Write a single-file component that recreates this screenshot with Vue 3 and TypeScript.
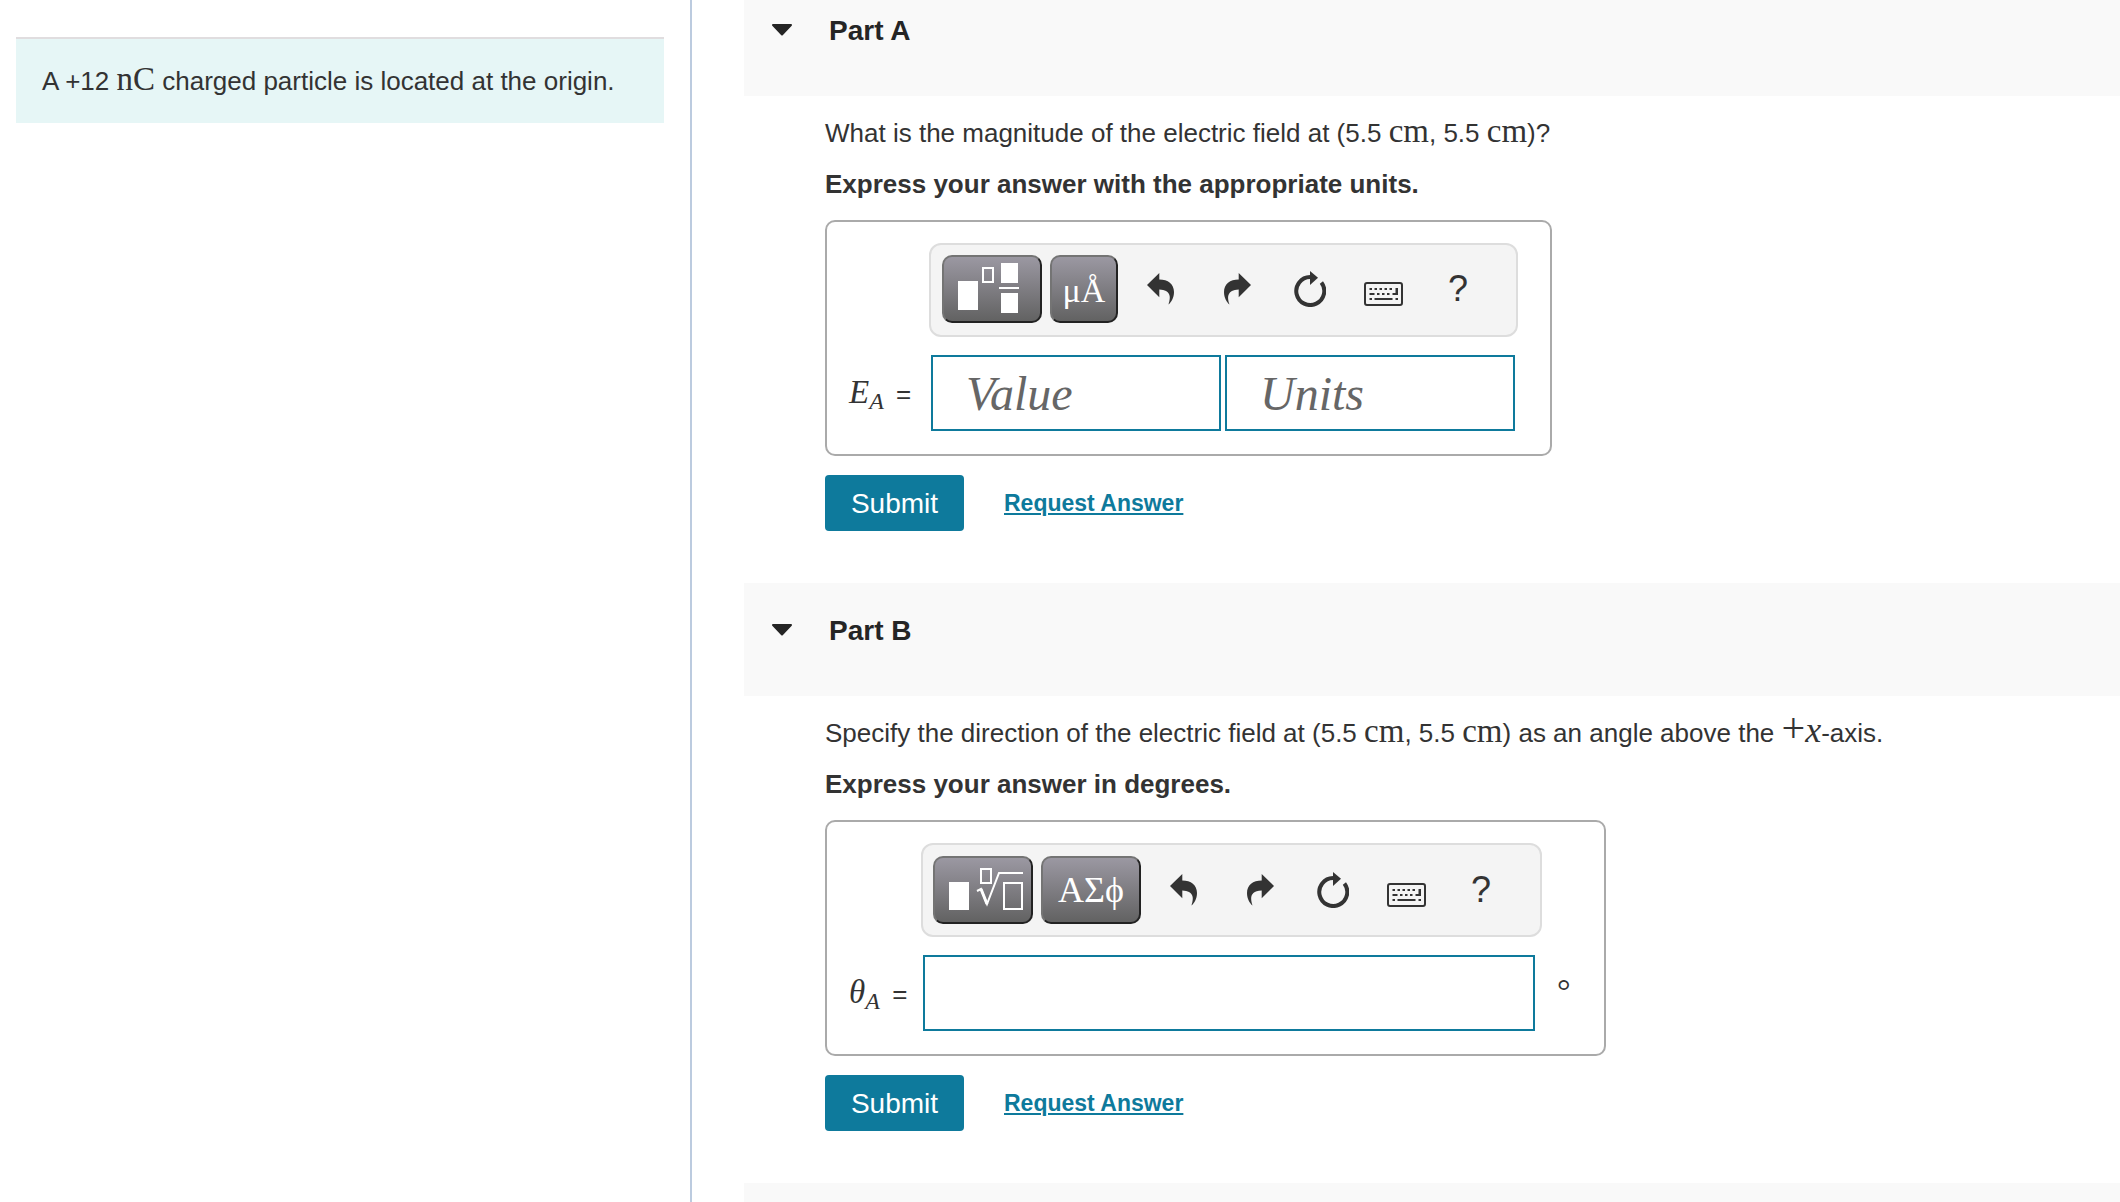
<script setup lang="ts">
import { ref } from 'vue'

const value = ref('')
const units = ref('')
const angle = ref('')

const shapes = {
  undo: 'M0 12 12.3 0V6.5C21 6.5 27 11 27 19c0 6-3 10.500-5.500 12.500C24 24 24 17 12.300 16.500V24.300Z',
  redo: 'M27 12 14.700 0V6.500C6 6.500 0 11 0 19c0 6 3 10.500 5.500 12.500C3 24 3 17 14.700 16.500V24.300Z',
}
</script>

<template>
  <div class="page">
    <aside class="intro">
      <p class="intro__card">A +12 <span class="math">nC</span> charged particle is located at the origin.</p>
    </aside>

    <main class="parts">
      <section class="part">
        <header class="part__header">
          <button class="toggle" type="button" aria-label="Collapse Part A">
            <svg width="22" height="12" viewBox="0 0 22 12"><path d="M2 1H20L11 10.500Z" stroke-width="2" stroke-linejoin="round" /></svg>
          </button>
          <h2 class="part__title">Part A</h2>
        </header>
        <form class="part__body" @submit.prevent>
          <p class="text">What is the magnitude of the electric field at (5.5 <span class="math">cm</span>, 5.5 <span class="math">cm</span>)?</p>
          <p class="text text--strong">Express your answer with the appropriate units.</p>
          <div class="answer answer--pair">
            <div class="toolbar">
              <button class="palette" type="button" aria-label="Templates">
                <svg width="96" height="64" viewBox="0 0 96 64" fill="#fff">
                  <path d="M14 24h20v29H14zM57 6h17v20H57zM55 30h20v2H55zM57 36h17v20H57z" />
                  <path d="M39 11h10v14H39z" fill="none" stroke="#fff" stroke-width="2" />
                </svg>
              </button>
              <button class="palette palette--units" type="button">μÅ</button>
              <button class="tool tool--undo" type="button" aria-label="Undo">
                <svg width="27" height="32" viewBox="0 0 27 32"><path :d="shapes.undo" /></svg>
              </button>
              <button class="tool tool--redo" type="button" aria-label="Redo">
                <svg width="27" height="32" viewBox="0 0 27 32"><path :d="shapes.redo" /></svg>
              </button>
              <button class="tool tool--reset" type="button" aria-label="Reset">
                <svg width="32" height="36" viewBox="0 0 32 36">
                  <path d="M27.400 11.500A14 14 0 1 1 16 6" fill="none" stroke="#333" stroke-width="4" />
                  <path d="M16 0 24 6.800 16 14Z" />
                </svg>
              </button>
              <button class="tool tool--keys" type="button" aria-label="Keyboard shortcuts">
                <svg width="39" height="24" viewBox="0 0 39 24">
                  <rect x="1" y="1" width="37" height="22" rx="2" fill="none" stroke="#333" stroke-width="2" />
                  <path d="M5.500 6h2.500v2H5.500zM10.500 6H13v2h-2.500zM15.500 6H18v2h-2.500zM20.500 6H23v2h-2.500zM25.500 6H28v2h-2.500zM31.500 6H34v7h-5.500v-2h3zM5.500 11h5v2h-5zM13 11h2.500v2H13zM18 11h2.500v2H18zM23 11h2.500v2H23zM5.500 16H8v2H5.500zM10.500 16h18v2h-18zM31.500 16H34v2h-2.500z" />
                </svg>
              </button>
              <button class="tool tool--help" type="button" aria-label="Help">?</button>
            </div>
            <label class="symbol" for="value-a"><i>E</i><sub>A</sub> <span class="equals">=</span></label>
            <div class="fields">
              <input id="value-a" v-model="value" class="field" type="text" placeholder="Value" />
              <input v-model="units" class="field" type="text" placeholder="Units" aria-label="Units" />
            </div>
          </div>
          <div class="actions">
            <button class="submit" type="submit">Submit</button>
            <a class="request" href="#">Request Answer</a>
          </div>
        </form>
      </section>

      <section class="part">
        <header class="part__header">
          <button class="toggle" type="button" aria-label="Collapse Part B">
            <svg width="22" height="12" viewBox="0 0 22 12"><path d="M2 1H20L11 10.500Z" stroke-width="2" stroke-linejoin="round" /></svg>
          </button>
          <h2 class="part__title">Part B</h2>
        </header>
        <form class="part__body" @submit.prevent>
          <p class="text">Specify the direction of the electric field at (5.5 <span class="math">cm</span>, 5.5 <span class="math">cm</span>) as an angle above the <span class="math math--axis">+<i>x</i></span>-axis.</p>
          <p class="text text--strong">Express your answer in degrees.</p>
          <div class="answer answer--single">
            <div class="toolbar">
              <button class="palette" type="button" aria-label="Templates">
                <svg width="96" height="64" viewBox="0 0 96 64" fill="none" stroke="#fff" stroke-width="2">
                  <path d="M14 24h20v28H14z" fill="#fff" stroke="none" />
                  <path d="M46 11h10v14H46zM69 25h18v26H69zM42 33 46 31 52 46 64 15H88" />
                  <path d="M46 31 52 46" stroke-width="3" />
                </svg>
              </button>
              <button class="palette" type="button">ΑΣϕ</button>
              <button class="tool tool--undo" type="button" aria-label="Undo">
                <svg width="27" height="32" viewBox="0 0 27 32"><path :d="shapes.undo" /></svg>
              </button>
              <button class="tool tool--redo" type="button" aria-label="Redo">
                <svg width="27" height="32" viewBox="0 0 27 32"><path :d="shapes.redo" /></svg>
              </button>
              <button class="tool tool--reset" type="button" aria-label="Reset">
                <svg width="32" height="36" viewBox="0 0 32 36">
                  <path d="M27.400 11.500A14 14 0 1 1 16 6" fill="none" stroke="#333" stroke-width="4" />
                  <path d="M16 0 24 6.800 16 14Z" />
                </svg>
              </button>
              <button class="tool tool--keys" type="button" aria-label="Keyboard shortcuts">
                <svg width="39" height="24" viewBox="0 0 39 24">
                  <rect x="1" y="1" width="37" height="22" rx="2" fill="none" stroke="#333" stroke-width="2" />
                  <path d="M5.500 6h2.500v2H5.500zM10.500 6H13v2h-2.500zM15.500 6H18v2h-2.500zM20.500 6H23v2h-2.500zM25.500 6H28v2h-2.500zM31.500 6H34v7h-5.500v-2h3zM5.500 11h5v2h-5zM13 11h2.500v2H13zM18 11h2.500v2H18zM23 11h2.500v2H23zM5.500 16H8v2H5.500zM10.500 16h18v2h-18zM31.500 16H34v2h-2.500z" />
                </svg>
              </button>
              <button class="tool tool--help" type="button" aria-label="Help">?</button>
            </div>
            <label class="symbol" for="value-b"><i>θ</i><sub>A</sub> <span class="equals">=</span></label>
            <div class="fields">
              <input id="value-b" v-model="angle" class="field" type="text" />
            </div>
            <span class="degree">°</span>
          </div>
          <div class="actions">
            <button class="submit" type="submit">Submit</button>
            <a class="request" href="#">Request Answer</a>
          </div>
        </form>
      </section>

      <section class="part">
        <header class="part__header"></header>
      </section>
    </main>
  </div>
</template>

<style>
body {
  margin: 0;
  background: #fff;
}
</style>

<style scoped>
.page {
  display: grid;
  grid-template-columns: 173fr 357fr;
  height: 100vh;
  overflow: hidden;
  color: #333;
  font-family: "Liberation Sans", Arial, sans-serif;
  font-size: 26px;
  line-height: 30px;
}

.page *,
.page *::before {
  box-sizing: border-box;
}

button,
input {
  margin: 0;
  padding: 0;
  font: inherit;
  color: inherit;
}

svg {
  display: block;
}

.intro {
  padding: 37px 26px 0 16px;
  border-right: 2px solid #bccbdf;
}

.intro__card {
  margin: 0;
  padding: 27px 26px;
  border-top: 2px solid #e0dddf;
  background: #e6f6f6;
}

.math {
  font-family: "Liberation Serif", "Times New Roman", serif;
  font-size: 33px;
  line-height: 0;
}

.math--axis {
  font-size: 42px;
}

.math--axis i {
  font-size: 36px;
}

.parts {
  min-width: 0;
  margin-top: -17px;
  padding-left: 52px;
}

.part__header {
  display: flex;
  align-items: center;
  gap: 36px;
  height: 113px;
  padding: 0 0 18px 27px;
  background: #f9f9f9;
  color: #252525;
}

.toggle {
  padding-bottom: 2px;
  border: 0;
  background: none;
}

.toggle svg {
  fill: #252525;
  stroke: #252525;
}

.part__title {
  margin: 0;
  font-size: 28px;
  line-height: 32px;
}

.part__body {
  padding: 22px 0 52px 81px;
}

.text {
  margin: 0 0 21px;
}

.text--strong {
  font-weight: bold;
}

.answer {
  display: grid;
  width: max-content;
  row-gap: 18px;
  padding: 21px 0 23px;
  border: 2px solid #aaa;
  border-radius: 10px;
}

.answer--pair {
  grid-template-columns: 102px 589px 32px;
}

.answer--single {
  grid-template-columns: 94px 621px 62px;
}

.toolbar {
  grid-column: 2;
  display: flex;
  align-items: center;
  height: 94px;
  padding: 0 10px;
  border: 2px solid #ddd;
  border-radius: 12px;
  background: #f4f4f4;
}

.answer--pair .toolbar {
  padding: 0 11px 2px;
}

.palette {
  display: flex;
  align-items: center;
  justify-content: center;
  width: 100px;
  height: 68px;
  margin-right: 8px;
  border: 2px solid;
  border-color: #747474 #222 #222 #747474;
  border-radius: 10px;
  background: linear-gradient(#9b98a2, #626262);
  color: #fff;
  font-family: "Liberation Serif", "Times New Roman", serif;
  font-size: 36px;
  line-height: 40px;
}

.palette--units {
  width: 68px;
  padding-top: 4px;
  font-size: 34px;
}

.tool {
  border: 0;
  background: none;
}

.tool svg {
  fill: #333;
}

.tool--undo {
  margin-left: 21px;
}

.tool--redo {
  margin-left: 50px;
}

.tool--reset {
  margin-left: 43px;
}

.tool--keys {
  margin-left: 38px;
  padding-top: 10px;
}

.tool--help {
  margin-left: 45px;
  font-size: 36px;
  line-height: 40px;
}

.symbol {
  grid-column: 1;
  align-self: center;
  padding-left: 22px;
  font-family: "Liberation Serif", "Times New Roman", serif;
  font-size: 33px;
  line-height: 36px;
  white-space: nowrap;
}

.symbol sub {
  font-size: 24px;
  font-style: italic;
  line-height: 0;
  vertical-align: -6px;
}

.equals {
  margin-left: 4px;
  font-family: "Liberation Sans", Arial, sans-serif;
  font-size: 26px;
}

.fields {
  display: flex;
  gap: 4px;
  padding: 0 3px 0 2px;
}

.answer--single .fields {
  padding-right: 7px;
}

.field {
  flex: 1;
  min-width: 0;
  height: 76px;
  padding: 0 33px;
  border: 2px solid #0e7a9c;
  border-radius: 0;
  background: #fff;
  font-family: "Liberation Serif", "Times New Roman", serif;
  font-size: 48px;
  outline: 0;
}

.field::placeholder {
  color: #666;
  font-style: italic;
  opacity: 1;
}

.degree {
  align-self: center;
  padding: 0 0 4px 15px;
  font-family: "Liberation Serif", "Times New Roman", serif;
  font-size: 34px;
}

.actions {
  display: flex;
  align-items: center;
  gap: 40px;
  margin-top: 19px;
}

.submit {
  width: 139px;
  height: 56px;
  padding-top: 2px;
  border: 0;
  border-radius: 4px;
  background: #0e7a9c;
  color: #fff;
  font-size: 28px;
}

.request {
  color: #0e7a9c;
  font-size: 23px;
  font-weight: bold;
  text-decoration-thickness: 2px;
  text-underline-offset: 2px;
}
</style>
